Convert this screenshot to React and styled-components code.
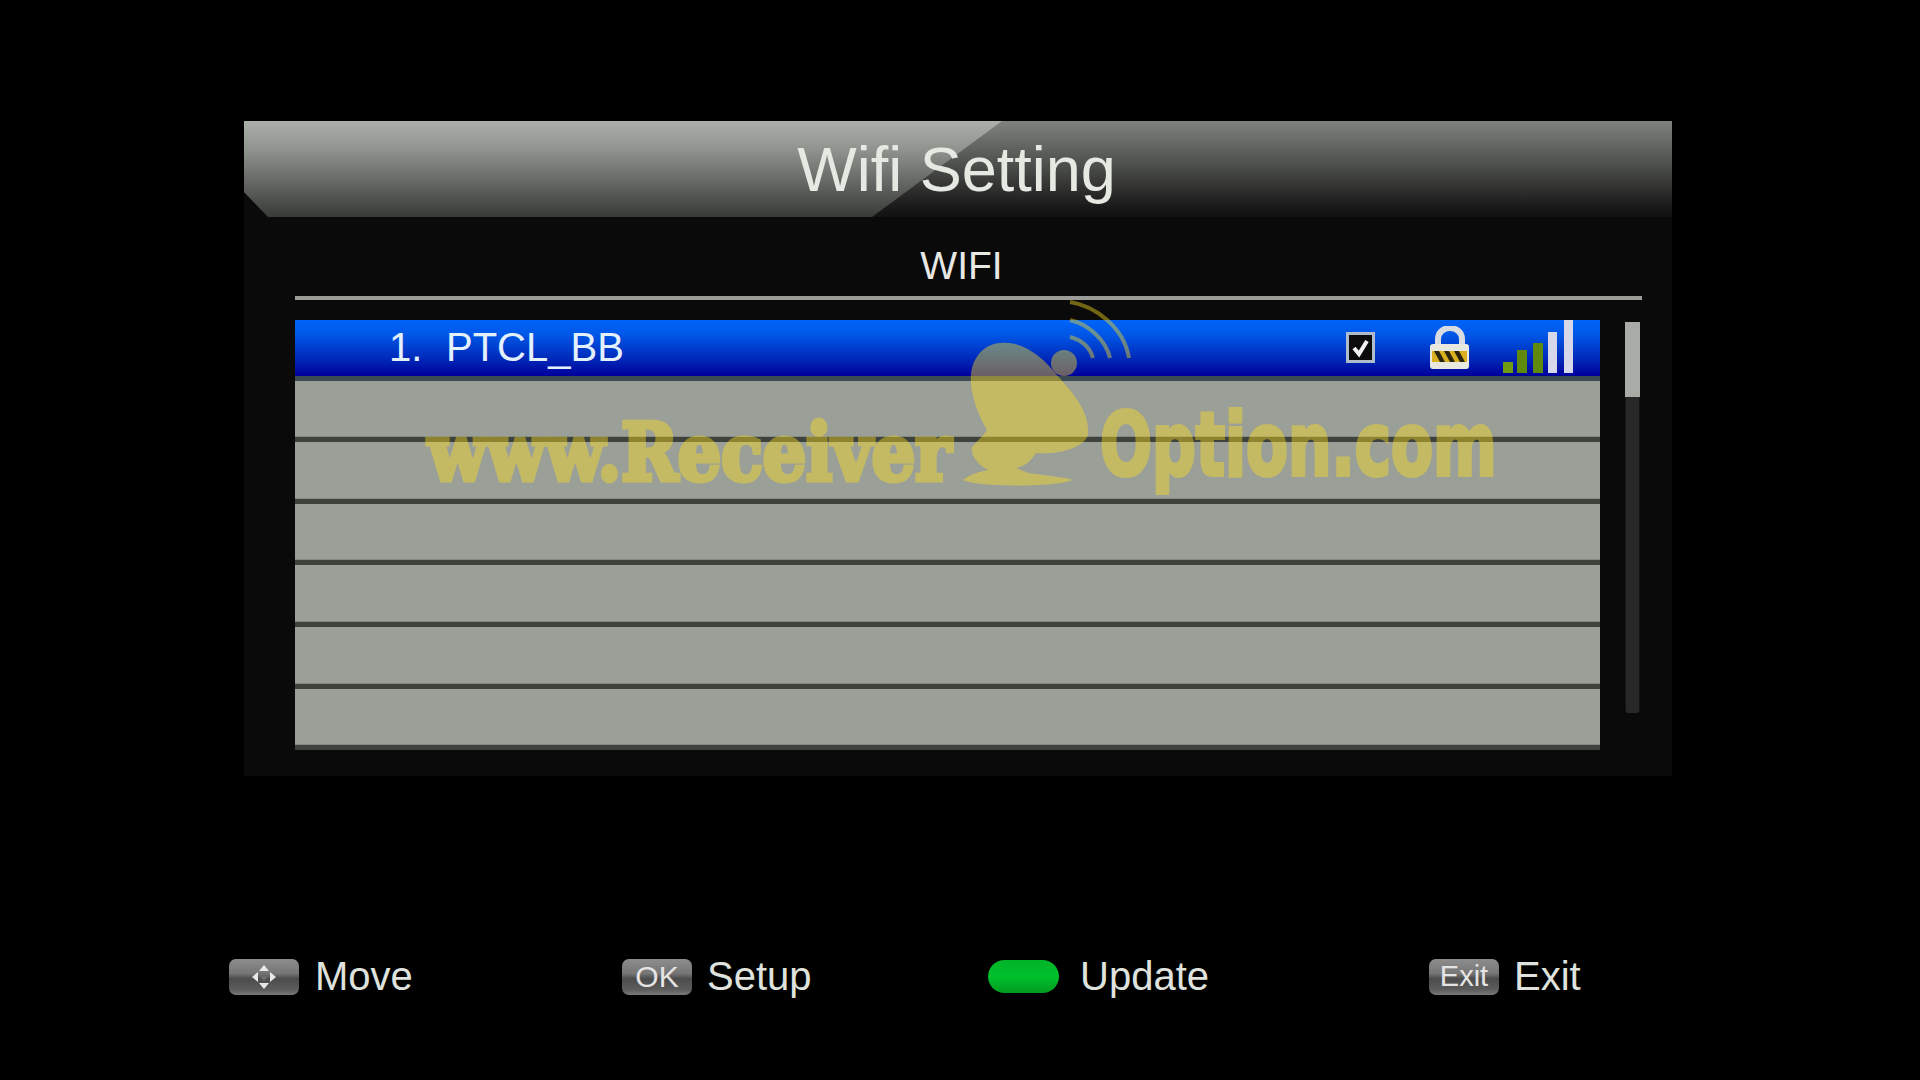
import React from "react";
import styled, { createGlobalStyle } from "styled-components";

const Global = createGlobalStyle`
  html, body { margin: 0; padding: 0; background: #000; }
  body { font-family: "Liberation Sans", Arial, sans-serif; }
`;

const Screen = styled.div`
  position: relative;
  width: 1920px;
  height: 1080px;
  overflow: hidden;
  background: #000;
  color: #e6e9e4;
  padding: 121px 0 0 244px;
  box-sizing: border-box;
`;

const Panel = styled.section`
  width: 1428px;
  height: 655px;
  background: #0a0a0a;
`;

const Header = styled.header`
  position: relative;
  height: 96px;
  background: linear-gradient(#7f827e, #4e504d 45%, #161716 92%, #111211);
  clip-path: polygon(0 0, 100% 0, 100% 100%, 24px 100%, 0 71px);
  display: flex;
  align-items: center;
  justify-content: center;
  &::before {
    content: "";
    position: absolute;
    inset: 0;
    background: linear-gradient(#abb0ab, #8f938e 30%, #5a5d59 72%, #383a37);
    clip-path: polygon(0 0, 758px 0, 628px 100%, 0 100%);
  }
`;

const Title = styled.h1`
  position: relative;
  margin: 0 3px 0 0;
  font-size: 63px;
  font-weight: 400;
  color: #e6e9e2;
`;

const Body = styled.div`
  padding: 0 30px 0 51px;
`;

const SubTitle = styled.h2`
  height: 79px;
  margin: 0;
  padding: 19px 14px 0 0;
  box-sizing: border-box;
  display: flex;
  align-items: center;
  justify-content: center;
  font-size: 39px;
  font-weight: 400;
  color: #e8e8e4;
`;

const Divider = styled.div`
  height: 4px;
  background: #9c9c98;
`;

const ListArea = styled.div`
  display: flex;
  gap: 25px;
  margin-top: 20px;
`;

const List = styled.ul`
  width: 1305px;
  margin: 0;
  padding: 0;
  list-style: none;
`;

const Row = styled.li`
  height: 61.67px;
  box-sizing: border-box;
  border-bottom: 5px solid #3d423d;
  background: #9a9f98;
  box-shadow: inset 0 -1px 0 #868a84;
  display: flex;
  align-items: center;
  padding: 0 27px 0 94px;
  font-size: 40px;
  color: #e4f0fb;
  ${(p) =>
    p.$selected &&
    `
    height: 60.5px;
    background: linear-gradient(#0064fa, #0058e8 25%, #0028b8 70%, #00009a);
    border-bottom-color: #3c4a52;
    box-shadow: none;
  `}
`;

const RowIndex = styled.span`
  width: 57px;
`;

const RowName = styled.span`
  flex: 1;
`;

const CheckBox = styled.svg`
  width: 29px;
  height: 31px;
  margin-right: 55px;
`;

const Lock = styled.svg`
  width: 40px;
  height: 44px;
  margin-right: 33px;
`;

const Signal = styled.svg`
  width: 70px;
  height: 53px;
  margin-top: -2px;
`;

const Track = styled.div`
  width: 15px;
  height: 391px;
  margin-top: 2px;
  box-sizing: border-box;
  border: solid #141414;
  border-width: 0 1px;
  border-radius: 0 0 3px 3px;
  background: #282828;
`;

const Thumb = styled.div`
  height: 75px;
  margin: 0 -1px;
  background: #a8aba6;
`;

const Footer = styled.footer`
  display: grid;
  grid-template-columns: 393px 366px 441px auto;
  margin: 178px 0 0 -15px;
`;

const Hint = styled.div`
  display: flex;
  align-items: center;
  gap: ${(p) => p.$gap}px;
  font-size: 40px;
  color: #dfe2dd;
`;

const Key = styled.span`
  width: 70px;
  height: 36px;
  border-radius: 7px;
  background: linear-gradient(#8d8d8d, #767676 40%, #4c4c4c 55%, #5c5c5c 85%, #7a7a7a);
  display: flex;
  align-items: center;
  justify-content: center;
  font-size: ${(p) => p.$size || 28}px;
  color: #e4e4e4;
`;

const GreenKey = styled.span`
  width: 71px;
  height: 33px;
  border-radius: 17px;
  background: linear-gradient(#00b428, #00c02c 50%, #009a20);
`;

const Watermark = styled.div`
  position: absolute;
  inset: 0;
  opacity: 0.42;
  pointer-events: none;
  color: #ffe01e;
`;

const Receiver = styled.span`
  position: absolute;
  left: 428px;
  top: 403px;
  font-family: "DejaVu Serif", serif;
  font-weight: 700;
  font-size: 78px;
  line-height: 100px;
  white-space: nowrap;
  transform-origin: 0 0;
  transform: scaleX(0.875);
  -webkit-text-stroke: 5px #ffe01e;
`;

const Option = styled.span`
  position: absolute;
  left: 1100px;
  top: 395px;
  font-family: "DejaVu Sans", sans-serif;
  font-weight: 700;
  font-size: 88px;
  line-height: 100px;
  white-space: nowrap;
  transform-origin: 0 0;
  transform: scaleX(0.695);
  -webkit-text-stroke: 4px #ffe01e;
`;

const Dish = styled.svg`
  position: absolute;
  left: 950px;
  top: 290px;
  width: 200px;
  height: 200px;
`;

const MoveIcon = () => (
  <svg width="28" height="28" viewBox="0 0 28 28" fill="#e8e8e8">
    <path d="M14 2l5 6h-10zM14 26l-5-6h10zM2 14l6-5v10zM26 14l-6 5v-10z" />
    <path d="M14 10l4 4-4 4-4-4z" fill="#6a6a6a" />
  </svg>
);

export default function App() {
  const rows = [0, 1, 2, 3, 4, 5];
  return (
    <Screen>
      <Global />
      <Panel>
        <Header>
          <Title>Wifi Setting</Title>
        </Header>
        <Body>
          <SubTitle>WIFI</SubTitle>
          <Divider />
          <ListArea>
            <List>
              <Row $selected>
                <RowIndex>1.</RowIndex>
                <RowName>PTCL_BB</RowName>
                <CheckBox viewBox="0 0 29 31">
                  <rect x="1.5" y="1.5" width="26" height="28" fill="#0c0c0c" stroke="#aebccb" strokeWidth="3" />
                  <path d="M8 16l5 6 8-13" fill="none" stroke="#f2f2f2" strokeWidth="4" />
                </CheckBox>
                <Lock viewBox="0 0 40 44">
                  <path d="M8 20V13C8 6 14 2 20 2s12 4 12 11v7" fill="none" stroke="#d8dce0" strokeWidth="6" />
                  <rect x="0" y="18" width="39" height="25" rx="3" fill="#e8e8de" />
                  <rect x="2" y="25" width="35" height="11" fill="#d8b020" />
                  <path d="M4 25l6 11h5l-6-11zM14 25l6 11h5l-6-11zM24 25l6 11h5l-6-11z" fill="#2a2410" />
                </Lock>
                <Signal viewBox="0 0 70 53">
                  <rect x="0" y="42" width="10" height="11" fill="#6f9a12" />
                  <rect x="14" y="30" width="10" height="23" fill="#5f8a0e" />
                  <rect x="30" y="23" width="10" height="30" fill="#5f8a0e" />
                  <rect x="45" y="12" width="9" height="41" fill="#d6d8ea" />
                  <rect x="61" y="0" width="9" height="53" fill="#d6d8ea" />
                </Signal>
              </Row>
              {rows.map((r) => (
                <Row key={r} />
              ))}
            </List>
            <Track>
              <Thumb />
            </Track>
          </ListArea>
        </Body>
      </Panel>
      <Footer>
        <Hint $gap={16}>
          <Key>
            <MoveIcon />
          </Key>
          Move
        </Hint>
        <Hint $gap={15}>
          <Key $size={30}>OK</Key>
          Setup
        </Hint>
        <Hint $gap={21}>
          <GreenKey />
          Update
        </Hint>
        <Hint $gap={15}>
          <Key $size={29}>Exit</Key>
          Exit
        </Hint>
      </Footer>
      <Watermark>
        <Receiver>www.Receiver</Receiver>
        <Dish viewBox="0 0 200 200">
          <path
            d="M50 53C72 50 94 68 106 84C124 104 140 122 138 145C134 158 108 165 86 163C80 172 75 176 66 178L78 183C100 186 120 188 122 190C110 197 30 198 13 190C20 184 32 181 38 180C28 175 20 165 22 157C30 148 34 145 37 140C24 118 16 90 24 72C30 60 38 54 50 53Z"
            fill="currentColor"
          />
          <circle cx="114" cy="73" r="13" fill="currentColor" />
          <path
            d="M120 47C132 50 140 58 143 68M120 30C138 34 156 50 160 68M120 12C146 16 174 38 179 68"
            fill="none"
            stroke="currentColor"
            strokeWidth="4"
          />
        </Dish>
        <Option>Option.com</Option>
      </Watermark>
    </Screen>
  );
}
